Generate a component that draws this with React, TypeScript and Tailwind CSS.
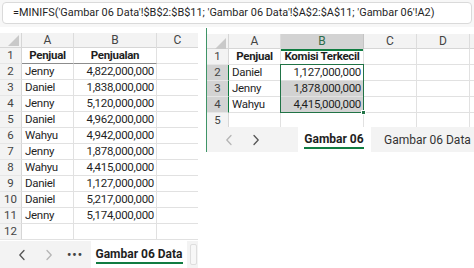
import React from 'react';

type Row = { n: string; a?: string; b?: string; head?: boolean };

const leftRows: Row[] = [
  { n: '1', a: 'Penjual', b: 'Penjualan', head: true },
  { n: '2', a: 'Jenny', b: '4,822,000,000' },
  { n: '3', a: 'Daniel', b: '1,838,000,000' },
  { n: '4', a: 'Jenny', b: '5,120,000,000' },
  { n: '5', a: 'Daniel', b: '4,962,000,000' },
  { n: '6', a: 'Wahyu', b: '4,942,000,000' },
  { n: '7', a: 'Jenny', b: '1,878,000,000' },
  { n: '8', a: 'Wahyu', b: '4,415,000,000' },
  { n: '9', a: 'Daniel', b: '1,127,000,000' },
  { n: '10', a: 'Daniel', b: '5,217,000,000' },
  { n: '11', a: 'Jenny', b: '5,174,000,000' },
  { n: '12' },
];

const rightRows: Row[] = [
  { n: '1', a: 'Penjual', b: 'Komisi Terkecil', head: true },
  { n: '2', a: 'Daniel', b: '1,127,000,000' },
  { n: '3', a: 'Jenny', b: '1,878,000,000' },
  { n: '4', a: 'Wahyu', b: '4,415,000,000' },
  { n: '5' },
];

// little grey triangle in the select-all corner
function Corner() {
  return (
    <div className="relative h-full border-r border-[#d6d6d6]">
      <svg className="absolute right-[2px] bottom-[2px]" width="11" height="11" viewBox="0 0 11 11">
        <polygon points="11,0 11,11 0,11" fill="#c9c9c9" />
      </svg>
    </div>
  );
}

function Chevron({ dir, dim }: { dir: 'l' | 'r'; dim?: boolean }) {
  return (
    <svg width="8" height="12" viewBox="0 0 8 12" className={dim ? 'text-[#b5b5b5]' : 'text-[#555]'}>
      <path
        d={dir === 'l' ? 'M6 1.5 L1.8 6 L6 10.5' : 'M2 1.5 L6.2 6 L2 10.5'}
        fill="none"
        stroke="currentColor"
        strokeWidth="1.3"
        strokeLinecap="round"
        strokeLinejoin="round"
      />
    </svg>
  );
}

function LeftSheet() {
  return (
    <div className="flex flex-col w-[198px] h-full pt-[6px]">
      {/* column headers */}
      <div className="grid grid-cols-[22px_52px_83px_41px] h-[15px] bg-[#f3f3f3] text-[12px] text-[#444] leading-[15px] border-b border-[#d6d6d6]">
        <Corner />
        <div className="text-center border-r border-[#dcdcdc]">A</div>
        <div className="text-center border-r border-[#dcdcdc]">B</div>
        <div className="text-center">C</div>
      </div>
      <div className="flex-1 overflow-hidden">
        {leftRows.map((r) => (
          <div key={r.n} className="grid grid-cols-[22px_52px_83px_41px] h-[16px] text-[11.5px] tracking-[-0.3px] leading-[15px]">
            <div className="bg-[#f3f3f3] text-center text-[#444] tracking-normal border-r border-[#d6d6d6] border-b border-b-[#e6e6e6]">{r.n}</div>
            <div
              className={`px-[3px] border-r border-[#e1e1e1] whitespace-nowrap ${
                r.head ? 'font-bold text-center border-b border-b-[#8c8c8c]' : 'border-b border-b-[#e1e1e1]'
              }`}
            >
              {r.a}
            </div>
            <div
              className={`px-[2px] border-r border-[#e1e1e1] whitespace-nowrap ${
                r.head ? 'font-bold text-center border-b border-b-[#8c8c8c]' : 'text-right border-b border-b-[#e1e1e1]'
              }`}
            >
              {r.b}
            </div>
            <div className="border-b border-[#e1e1e1]" />
          </div>
        ))}
      </div>
      {/* sheet tabs */}
      <div className="h-[27px] bg-[#f3f3f3] flex items-stretch shrink-0">
        <div className="w-[91px] flex items-center">
          <div className="w-[18px]" />
          <Chevron dir="l" />
          <div className="w-[19px]" />
          <Chevron dir="r" dim />
          <span className="ml-[14px] text-[12px] leading-none tracking-[1px] text-[#444] font-bold">•••</span>
        </div>
        <div className="w-[96px] bg-white flex flex-col items-center justify-center">
          <span className="text-[12px] font-bold text-[#1f1f1f] leading-[16px] whitespace-nowrap border-b-2 border-[#107c41]">
            Gambar 06 Data
          </span>
        </div>
        <div className="flex items-center pl-[3px]">
          <div className="w-[7px] h-[21px] rounded-[2px] border border-[#dedede] bg-[#f7f7f7]" />
        </div>
      </div>
    </div>
  );
}

function RightSheet() {
  return (
    <div className="flex flex-col flex-1 h-[124px] mt-[1px] border-l border-[#3f9467]">
      <div className="h-[6px]" />
      <div className="grid grid-cols-[22px_52px_83px_53px_53px_1fr] h-[15px] bg-[#f3f3f3] text-[12px] text-[#444] leading-[15px] border-b border-[#d6d6d6]">
        <Corner />
        <div className="text-center border-r border-[#dcdcdc]">A</div>
        <div className="text-center bg-[#d3d3d3] text-[#2d6b4a] border-b-2 border-[#107c41] border-r border-r-[#c4c4c4]">B</div>
        <div className="text-center border-r border-[#dcdcdc]">C</div>
        <div className="text-center border-r border-[#dcdcdc]">D</div>
        <div />
      </div>
      <div className="relative flex-1 overflow-hidden">
        {rightRows.map((r) => {
          const sel = r.n === '2' || r.n === '3' || r.n === '4';
          const shade = r.n === '3' || r.n === '4';
          return (
            <div key={r.n} className="grid grid-cols-[22px_52px_83px_53px_53px_1fr] h-[16px] text-[11.5px] tracking-[-0.3px] leading-[15px]">
              <div
                className={`text-center text-[#444] tracking-normal border-r border-b border-b-[#e6e6e6] ${
                  sel ? 'bg-[#d3d3d3] border-r-[#107c41]' : 'bg-[#f3f3f3] border-r-[#d6d6d6]'
                }`}
              >
                {r.n}
              </div>
              <div className={`px-[3px] border-r border-b border-[#e1e1e1] whitespace-nowrap ${r.head ? 'font-bold text-center' : ''}`}>
                {r.a}
              </div>
              <div
                className={`px-[2px] border-r border-b border-[#e1e1e1] whitespace-nowrap ${
                  r.head ? 'font-bold text-center' : 'text-right'
                } ${shade ? 'bg-[#d2d2d2]' : ''}`}
              >
                {r.b}
              </div>
              <div className="border-r border-b border-[#e1e1e1]" />
              <div className="border-r border-b border-[#e1e1e1]" />
              <div className="border-b border-[#e1e1e1]" />
            </div>
          );
        })}
        {/* selection outline B2:B4 */}
        <div className="absolute left-[73px] top-[15px] w-[84px] h-[49px] border border-[#217346] pointer-events-none">
          <div className="absolute -right-[3px] -bottom-[3px] w-[5px] h-[5px] bg-[#217346] border border-white" />
        </div>
      </div>
      <div className="h-[25px] bg-[#f3f3f3] flex items-stretch shrink-0">
        <div className="w-[91px] flex items-center">
          <div className="w-[18px]" />
          <Chevron dir="l" dim />
          <div className="w-[19px]" />
          <Chevron dir="r" />
        </div>
        <div className="w-[72px] bg-white flex items-center justify-center">
          <span className="text-[12px] font-bold text-[#1f1f1f] leading-[16px] whitespace-nowrap border-b-2 border-[#107c41]">
            Gambar 06
          </span>
        </div>
        <div className="flex items-center pl-[13px] border-l border-white">
          <span className="text-[12px] text-[#333] whitespace-nowrap">Gambar 06 Data</span>
        </div>
      </div>
    </div>
  );
}

export default function App() {
  return (
    <div className="w-[474px] h-[268px] bg-white overflow-hidden font-['Roboto',sans-serif] text-[#1f1f1f]">
      {/* formula bar */}
      <div className="h-[27px] bg-[#f7f7f7] px-[2px] pt-[2px]">
        <div className="h-[22px] bg-white border border-[#dadada] rounded-[4px] flex items-center pl-[10px] text-[10.9px] whitespace-nowrap overflow-hidden">
          =MINIFS('Gambar 06 Data'!$B$2:$B$11; 'Gambar 06 Data'!$A$2:$A$11; 'Gambar 06'!A2)
        </div>
      </div>
      <div className="flex h-[241px]">
        <LeftSheet />
        <div className="w-[8px]" />
        <RightSheet />
      </div>
    </div>
  );
}
